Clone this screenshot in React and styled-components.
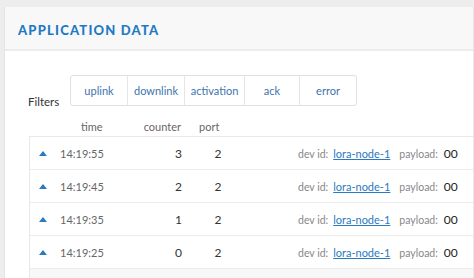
import styled, { createGlobalStyle } from "styled-components";

const GlobalStyle = createGlobalStyle`
    body {
        margin: 0;
        background: #ededed;
        font-family: Lato, "Open Sans", sans-serif;
        overflow: hidden;
    }
`

const filters = ["uplink", "downlink", "activation", "ack", "error"];
const filterWidths = [56, 56, 59, 54, 56];

const rows = [
    { time: "14:19:55", counter: 3 },
    { time: "14:19:45", counter: 2 },
    { time: "14:19:35", counter: 1 },
    { time: "14:19:25", counter: 0 },
];

export default function App() {
    return (
        <>
            <GlobalStyle />
            <Page>
                <Card>
                    <Header>
                        <Title>APPLICATION DATA</Title>
                    </Header>
                    <Body>
                        <FilterRow>
                            <FilterLabel>Filters</FilterLabel>
                            <ButtonGroup>
                                {filters.map((f, i) => (
                                    <FilterButton key={f} $w={filterWidths[i]}>{f}</FilterButton>
                                ))}
                            </ButtonGroup>
                        </FilterRow>

                        <HeadRow>
                            <span />
                            <HeadTime>time</HeadTime>
                            <HeadCounter>counter</HeadCounter>
                            <HeadPort>port</HeadPort>
                        </HeadRow>

                        <Table>
                            {rows.map((r) => (
                                <Row key={r.time}>
                                    <Arrow>
                                        <svg width="8" height="5" viewBox="0 0 8 5">
                                            <path d="M0 5 L4 0 L8 5 Z" fill="#2a7ac0" />
                                        </svg>
                                    </Arrow>
                                    <Time>{r.time}</Time>
                                    <Counter>{r.counter}</Counter>
                                    <Port>2</Port>
                                    <Info>
                                        <Key>dev id:</Key>
                                        <DevLink>lora-node-1</DevLink>
                                        <Key $gap>payload:</Key>
                                        <Payload>00</Payload>
                                    </Info>
                                </Row>
                            ))}
                            <Row $empty />
                        </Table>
                    </Body>
                </Card>
            </Page>
        </>
    );
}

const Page = styled.div`
    width: 474px;
    height: 278px;
    padding: 7px 0 0 4px;
    box-sizing: border-box;
    overflow: hidden;
`
const Card = styled.div`
    width: 468px;
    height: 271px;
    background: #fff;
    border-left: 1px solid #e3e3e3;
    border-right: 1px solid #e8e8e8;
    overflow: hidden;
`
const Header = styled.div`
    height: 42px;
    background: #f8f8f8;
    border-bottom: 2px solid #ececec;
    display: flex;
    align-items: center;
    padding-left: 13px;
`
const Title = styled.div`
    color: #1f7ac3;
    font-size: 13px;
    font-weight: 900;
    letter-spacing: 1.2px;
    margin-top: 4px;
`
const Body = styled.div`
    padding: 24px 0 0 23px;
`
const FilterRow = styled.div`
    display: flex;
    align-items: flex-end;
`
const FilterLabel = styled.div`
    font-size: 11.5px;
    color: #333;
    width: 42px;
    margin-bottom: -2px;
`
const ButtonGroup = styled.div`
    display: flex;
    border: 1px solid #e0e0e0;
    border-radius: 3px;
    height: 29px;
`
const FilterButton = styled.div`
    width: ${p => p.$w}px;
    flex: none;
    display: flex;
    align-items: center;
    justify-content: center;
    font-size: 11px;
    color: #3d74ae;
    & + & {
        border-left: 1px solid #e6e6e6;
    }
`
const cols = "30px 92px 30px 72px 1fr";

const HeadRow = styled.div`
    display: grid;
    grid-template-columns: ${cols};
    margin: 13px 0 0 1px;
    font-size: 11px;
    color: #666;
    height: 15px;
    line-height: 15px;
`
const HeadTime = styled.span`
    padding-left: 22px;
`
const HeadCounter = styled.span`
    text-align: right;
    white-space: nowrap;
    direction: rtl;
`
const HeadPort = styled.span`
    padding-left: 18px;
`
const Table = styled.div`
    margin: 2px 0 0 1px;
    border-left: 1px solid #e8e8e8;
    border-top: 1px solid #e8e8e8;
`
const Row = styled.div`
    display: grid;
    grid-template-columns: ${cols};
    align-items: center;
    height: 32px;
    border-bottom: 1px solid #ececec;
    background: ${p => p.$empty ? "#f7f7f7" : "#fff"};
`
const Arrow = styled.span`
    padding-left: 9px;
    display: flex;
    align-items: center;
`
const Time = styled.span`
    font-size: 11px;
    color: #666;
`
const Counter = styled.span`
    font-size: 12px;
    color: #333;
    text-align: right;
`
const Port = styled.span`
    font-size: 12px;
    color: #333;
    text-align: center;
`
const Info = styled.div`
    display: flex;
    align-items: baseline;
    padding-left: 44px;
    white-space: nowrap;
`
const Key = styled.span`
    font-size: 10.5px;
    color: #888;
    margin-left: ${p => p.$gap ? "9px" : "0"};
`
const DevLink = styled.a`
    font-size: 11px;
    color: #2a7ac0;
    text-decoration: underline;
    margin-left: 5px;
`
const Payload = styled.span`
    font-size: 12px;
    color: #222;
    margin-left: 6px;
`
